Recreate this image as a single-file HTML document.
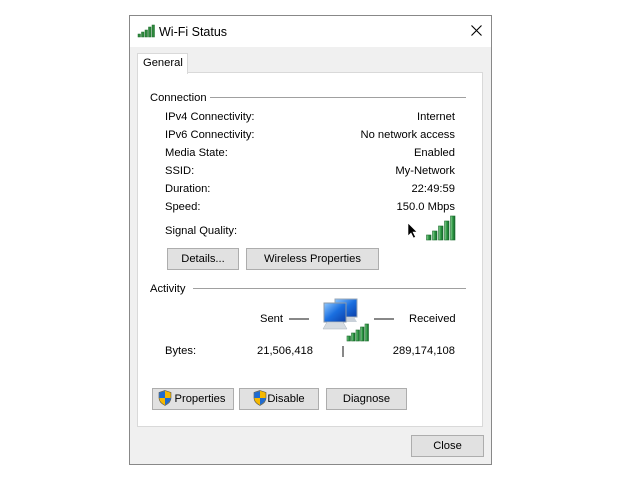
<!DOCTYPE html>
<html><head><meta charset="utf-8"><style>
*{margin:0;padding:0;box-sizing:border-box}
body{width:620px;height:480px;background:#fff;font-family:"Liberation Sans",sans-serif;font-size:11.2px;color:#000;position:relative;overflow:hidden}
.a{position:absolute;white-space:nowrap;margin-top:1px}
.win{position:absolute;left:129px;top:15px;width:363px;height:450px;border:1px solid #888;background:#f0f0f0}
.title{position:absolute;left:0;top:0;width:361px;height:31px;background:#fff}
.panel{position:absolute;left:137px;top:72px;width:346px;height:355px;background:#fff;border:1px solid #d9d9d9}
.tab{position:absolute;left:137px;top:53px;width:51px;height:21px;background:#fff;border:1px solid #d9d9d9;border-bottom:none}
.btn{position:absolute;height:22px;background:#e1e1e1;border:1px solid #adadad;text-align:center;line-height:21px}
.line{position:absolute;height:1px;background:#a0a0a0}
.r{text-align:right}
</style></head><body>
<div class="win"><div class="title"></div></div>
<svg class="a" style="left:137px;top:23px" width="18" height="14" viewBox="0 0 18 14">
<g fill="#2f8a3e" stroke="#1c6b2a" stroke-width=".5"><rect x="1" y="10" width="2.5" height="3"/><rect x="4.5" y="8" width="2.5" height="5"/><rect x="8" y="6" width="2.5" height="7"/><rect x="11.5" y="3" width="2.5" height="10"/><rect x="15" y="1" width="2.5" height="12"/></g></svg>
<div class="a" style="left:159px;top:24px;font-size:12.5px">Wi-Fi Status</div>
<svg class="a" style="left:471px;top:24px" width="11" height="11"><path d="M0.5 0.5L10.5 10.5M10.5 0.5L0.5 10.5" stroke="#000" stroke-width="1.1"/></svg>
<div class="panel"></div>
<div class="tab"></div>
<div class="a" style="left:143px;top:56px">General</div>
<div class="a" style="left:150px;top:91px">Connection</div>
<div class="line" style="left:210px;top:97px;width:256px"></div>
<div class="a" style="left:165px;top:110px">IPv4 Connectivity:</div>
<div class="a" style="left:165px;top:128px">IPv6 Connectivity:</div>
<div class="a" style="left:165px;top:146px">Media State:</div>
<div class="a" style="left:165px;top:164px">SSID:</div>
<div class="a" style="left:165px;top:182px">Duration:</div>
<div class="a" style="left:165px;top:200px">Speed:</div>
<div class="a" style="left:165px;top:224px">Signal Quality:</div>
<div class="a r" style="right:165px;top:110px">Internet</div>
<div class="a r" style="right:165px;top:128px">No network access</div>
<div class="a r" style="right:165px;top:146px">Enabled</div>
<div class="a r" style="right:165px;top:164px">My-Network</div>
<div class="a r" style="right:165px;top:182px">22:49:59</div>
<div class="a r" style="right:165px;top:200px">150.0 Mbps</div>
<svg class="a" style="left:407px;top:221px" width="12" height="18"><path d="M1 1L1 14L4 11L6.5 16L8.5 15L6 10L10 10Z" fill="#000" stroke="#fff" stroke-width=".6"/></svg>
<svg class="a" style="left:426px;top:214px" width="30" height="26" viewBox="0 0 30 26">
<defs><linearGradient id="g" x1="0" x2="1"><stop offset="0" stop-color="#8fd19a"/><stop offset=".5" stop-color="#2f9a45"/><stop offset="1" stop-color="#13602a"/></linearGradient></defs>
<g fill="url(#g)" stroke="#1b6d2c" stroke-width=".6"><rect x=".5" y="20" width="4.5" height="5"/><rect x="6.5" y="16" width="4.5" height="9"/><rect x="12.5" y="11" width="4.5" height="14"/><rect x="18.5" y="6" width="4.5" height="19"/><rect x="24.5" y="1" width="4.5" height="24"/></g></svg>
<div class="btn" style="left:167px;top:248px;width:72px">Details...</div>
<div class="btn" style="left:246px;top:248px;width:133px">Wireless Properties</div>
<div class="a" style="left:150px;top:282px">Activity</div>
<div class="line" style="left:193px;top:288px;width:273px"></div>
<div class="a" style="left:260px;top:312px">Sent</div>
<div class="line" style="left:289px;top:318px;width:20px;background:#888;height:2px"></div>
<div class="line" style="left:374px;top:318px;width:20px;background:#888;height:2px"></div>
<div class="a" style="left:409px;top:312px">Received</div>
<svg class="a" style="left:322px;top:296px" width="48" height="46" viewBox="0 0 48 46">
<defs><linearGradient id="s" x1="0" y1="0" x2="1" y2="1"><stop offset="0" stop-color="#8fc8ff"/><stop offset=".5" stop-color="#1a6fe0"/><stop offset="1" stop-color="#0b3fa8"/></linearGradient></defs>
<rect x="13" y="2" width="22" height="18" fill="url(#s)" stroke="#9aa7b5"/>
<path d="M16 20h16l3 5H13z" fill="#c9d1d9"/>
<rect x="2" y="6" width="22" height="19" fill="url(#s)" stroke="#8c99a8"/>
<path d="M5 25h16l4 7H1z" fill="#d5dbe1" stroke="#aab3bd" stroke-width=".5"/>
<g fill="url(#g)" stroke="#1b6d2c" stroke-width=".6"><rect x="25" y="39" width="3.5" height="5"/><rect x="29.5" y="36" width="3.5" height="8"/><rect x="34" y="33" width="3.5" height="11"/><rect x="38.5" y="30" width="3.5" height="14"/><rect x="43" y="27" width="3.5" height="17"/></g></svg>
<div class="a" style="left:165px;top:344px">Bytes:</div>
<div class="a r" style="right:307px;top:344px">21,506,418</div>
<div class="line" style="left:342px;top:346px;width:2px;height:11px;background:#888"></div>
<div class="a r" style="right:165px;top:344px">289,174,108</div>
<div class="btn" style="left:152px;top:388px;width:82px;padding-left:14px">Properties</div>
<div class="btn" style="left:239px;top:388px;width:80px;padding-left:14px">Disable</div>
<svg class="a" style="left:158px;top:389px" width="14" height="16" viewBox="0 0 14 16"><path d="M7 .5L13 2.5V8c0 4-3 6-6 7.5C4 14 1 12 1 8V2.5z" fill="#f5b800" stroke="#555" stroke-width=".6"/><path d="M7 1v7H1.2V2.6zM7 8h5.8c-.3 3.5-3 5.5-5.8 7z" fill="#1f6bd0"/></svg>
<svg class="a" style="left:253px;top:389px" width="14" height="16" viewBox="0 0 14 16"><path d="M7 .5L13 2.5V8c0 4-3 6-6 7.5C4 14 1 12 1 8V2.5z" fill="#f5b800" stroke="#555" stroke-width=".6"/><path d="M7 1v7H1.2V2.6zM7 8h5.8c-.3 3.5-3 5.5-5.8 7z" fill="#1f6bd0"/></svg>
<div class="btn" style="left:326px;top:388px;width:81px">Diagnose</div>
<div class="btn" style="left:411px;top:435px;width:73px">Close</div>
</body></html>
